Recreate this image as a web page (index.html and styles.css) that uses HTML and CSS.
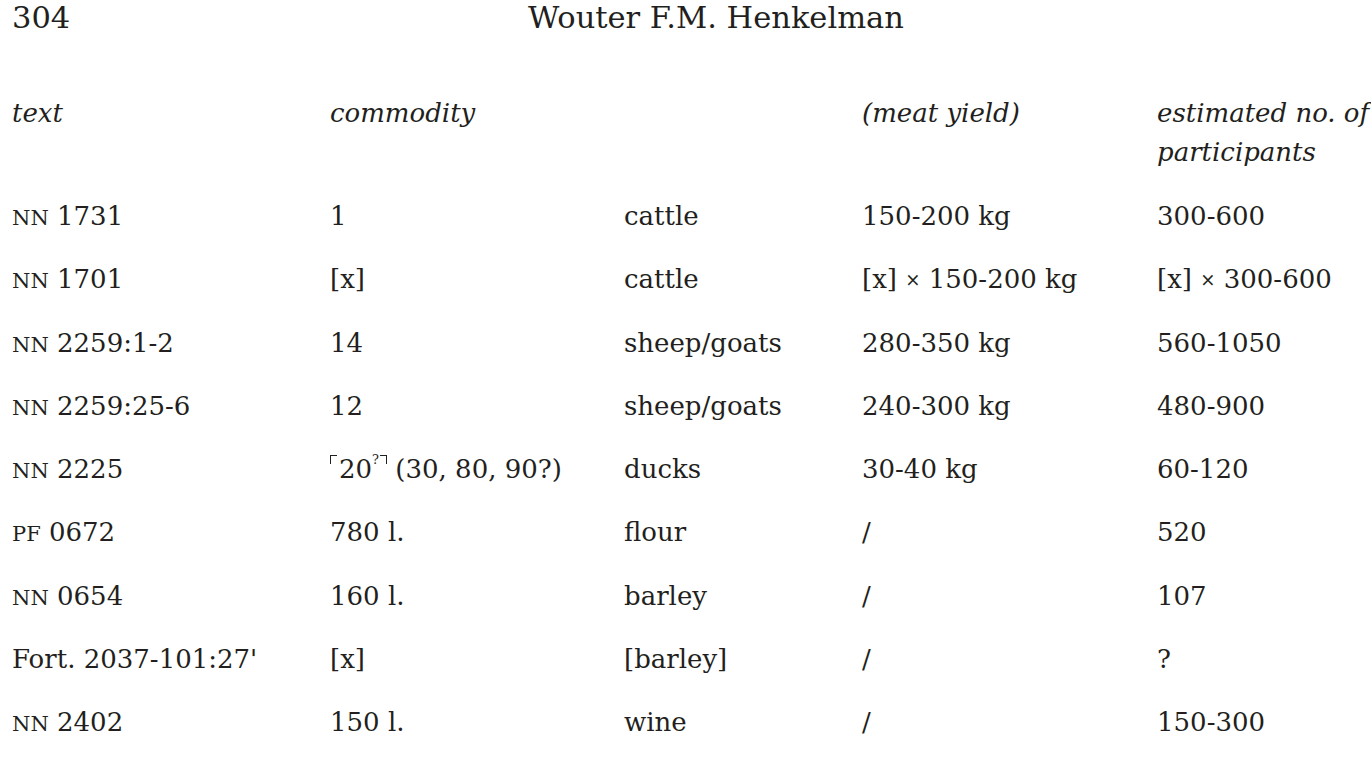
FILE: index.html
```html
<!DOCTYPE html>
<html lang="en">
<head>
<meta charset="utf-8">
<title>Wouter F.M. Henkelman 304</title>
<link rel="stylesheet" href="styles.css">
</head>
<body>
<div class="page">
  <header class="running-head">
    <span class="folio">304</span>
    <span class="author">Wouter F.M. Henkelman</span>
  </header>
  <div class="table">
    <div class="row head">
      <div class="cell">text</div>
      <div class="cell">commodity</div>
      <div class="cell"></div>
      <div class="cell">(meat yield)</div>
      <div class="cell">estimated no. of<br>participants</div>
    </div>
    <div class="row">
      <div class="cell"><span class="sc">nn</span> 1731</div>
      <div class="cell">1</div>
      <div class="cell">cattle</div>
      <div class="cell">150-200 kg</div>
      <div class="cell">300-600</div>
    </div>
    <div class="row">
      <div class="cell"><span class="sc">nn</span> 1701</div>
      <div class="cell">[x]</div>
      <div class="cell">cattle</div>
      <div class="cell">[x] <span class="times">×</span> 150-200 kg</div>
      <div class="cell">[x] <span class="times">×</span> 300-600</div>
    </div>
    <div class="row">
      <div class="cell"><span class="sc">nn</span> 2259:1-2</div>
      <div class="cell">14</div>
      <div class="cell">sheep/goats</div>
      <div class="cell">280-350 kg</div>
      <div class="cell">560-1050</div>
    </div>
    <div class="row">
      <div class="cell"><span class="sc">nn</span> 2259:25-6</div>
      <div class="cell">12</div>
      <div class="cell">sheep/goats</div>
      <div class="cell">240-300 kg</div>
      <div class="cell">480-900</div>
    </div>
    <div class="row">
      <div class="cell"><span class="sc">nn</span> 2225</div>
      <div class="cell"><span class="corner-l"></span>20<sup class="q">?</sup><span class="corner-r"></span> (30, 80, 90?)</div>
      <div class="cell">ducks</div>
      <div class="cell">30-40 kg</div>
      <div class="cell">60-120</div>
    </div>
    <div class="row">
      <div class="cell"><span class="sc">pf</span> 0672</div>
      <div class="cell">780 l.</div>
      <div class="cell">flour</div>
      <div class="cell">/</div>
      <div class="cell">520</div>
    </div>
    <div class="row">
      <div class="cell"><span class="sc">nn</span> 0654</div>
      <div class="cell">160 l.</div>
      <div class="cell">barley</div>
      <div class="cell">/</div>
      <div class="cell">107</div>
    </div>
    <div class="row">
      <div class="cell">Fort. 2037-101:27'</div>
      <div class="cell">[x]</div>
      <div class="cell">[barley]</div>
      <div class="cell">/</div>
      <div class="cell">?</div>
    </div>
    <div class="row">
      <div class="cell"><span class="sc">nn</span> 2402</div>
      <div class="cell">150 l.</div>
      <div class="cell">wine</div>
      <div class="cell">/</div>
      <div class="cell">150-300</div>
    </div>
  </div>
</div>
</body>
</html>
```
FILE: styles.css
```css
html, body {
  margin: 0;
  padding: 0;
  background: #ffffff;
}

body {
  font-family: "DejaVu Serif", "Liberation Serif", serif;
  color: #231f20;
  overflow: hidden;
}

.page {
  padding-left: 12px;
}

.running-head {
  display: grid;
  grid-template-columns: 516px auto;
  font-size: 30.5px;
  line-height: 36px;
  height: 36px;
  white-space: nowrap;
}

.table {
  margin-top: 58px;
  font-size: 26px;
}

.row {
  display: grid;
  grid-template-columns: 318px 294px 238px 295px 214px;
  height: 63.25px;
  line-height: 63.25px;
  white-space: nowrap;
}

.row.head {
  font-style: italic;
  height: 78px;
  line-height: 39px;
  margin-bottom: 13px;
}

.sc {
  text-transform: uppercase;
  font-size: 21px;
  line-height: 1;
}

.times {
  font-size: 0.7em;
  line-height: 1;
  vertical-align: 0.1em;
}

.q {
  font-size: 0.5em;
  line-height: 0;
  vertical-align: 1.1em;
}

.corner-l,
.corner-r {
  display: inline-block;
  width: 6px;
  height: 8px;
  border-top: 1.5px solid #231f20;
  vertical-align: 0.52em;
}

.corner-l {
  border-left: 1.5px solid #231f20;
  margin-right: 2px;
}

.corner-r {
  border-right: 1.5px solid #231f20;
  margin-left: 1px;
}
```
